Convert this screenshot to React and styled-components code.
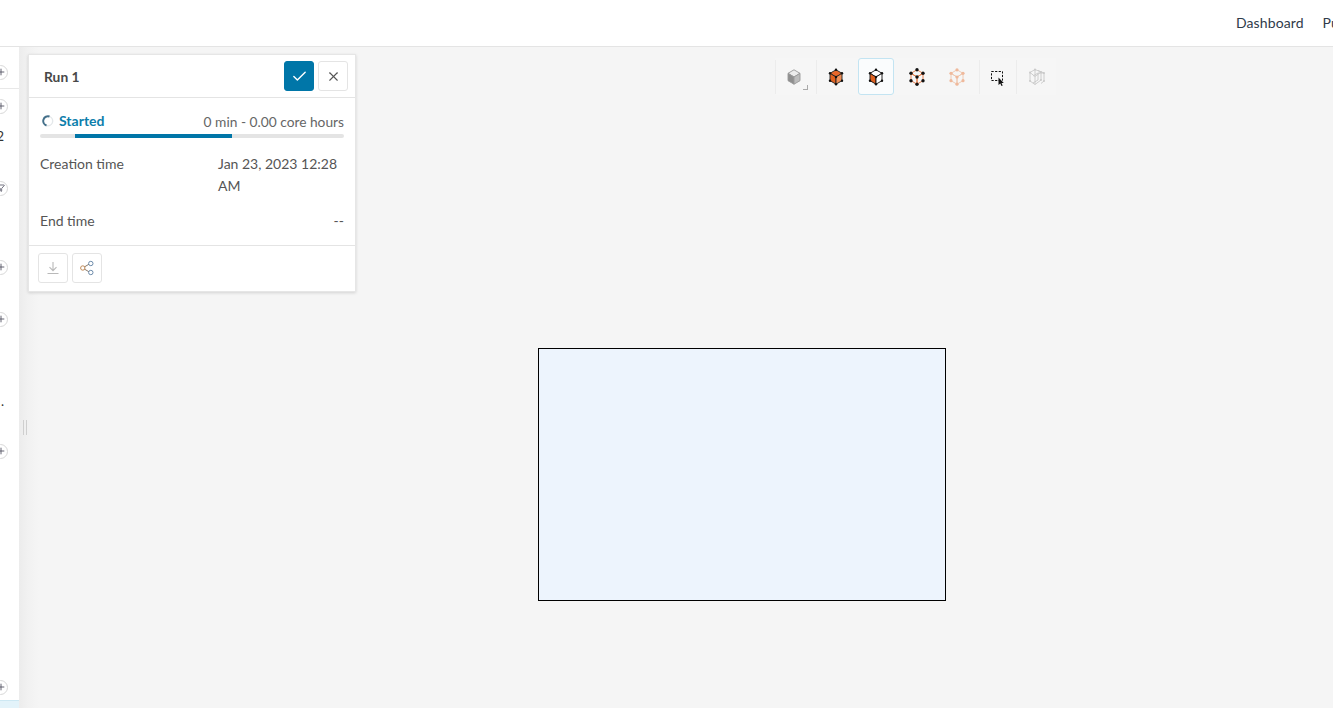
import React from "react";
import styled, { createGlobalStyle } from "styled-components";
import { Check, X, Plus, Filter } from "lucide-react";

const Global = createGlobalStyle`
  html, body { margin: 0; padding: 0; height: 100%; overflow: hidden; }
  body { font-family: Lato, "Liberation Sans", sans-serif; color: #444; background: #f5f5f5; }
  #root { height: 100%; }
`;

const Page = styled.div`display: flex; flex-direction: column; width: 1333px; height: 708px; overflow: hidden;`;
const Header = styled.header`flex: 0 0 47px; box-sizing: border-box; display: flex; align-items: center; justify-content: flex-end; background: #fff; border-bottom: 1px solid #e4e4e4;`;
const Nav = styled.nav`width: 97px; display: flex; gap: 19px; overflow: hidden; white-space: nowrap;`;
const NavLink = styled.a`font-size: 14px; line-height: 20px; letter-spacing: .1px; color: #2f3b4a; flex-shrink: 0;`;
const Body = styled.div`flex: 1; display: flex; min-height: 0;`;

const Sidebar = styled.aside`flex: 0 0 19px; background: #fff; display: flex; flex-direction: column; overflow: hidden; padding-top: 9px; box-sizing: border-box;`;
const SideRow = styled.div`
  flex: 0 0 ${p => p.$h || 26}px; margin-top: ${p => p.$mt || 0}px;
  display: flex; align-items: center; justify-content: flex-end; padding-right: ${p => p.$pr ?? 11}px;
  font-size: 13px; color: #333; white-space: nowrap;
  ${p => p.$line ? "border-bottom: 1px solid #e8e8e8;" : ""}
`;
const Circle = styled.span`flex-shrink: 0; width: 13px; height: 13px; border-radius: 50%; border: 1px solid #d8d8d8; background: #fff; display: flex; align-items: center; justify-content: center; color: #556;`;
const SideFoot = styled.div`flex: 1; background: #e3f3fa; border-top: 1px solid #cde8f3;`;

const Stage = styled.main`flex: 1; position: relative; display: flex; align-items: flex-start; background: linear-gradient(90deg, #ececec 0, #f1f1f1 8px, #f5f5f5 20px); padding: 7px 0 0 9px; box-sizing: border-box;`;
const Grip = styled.span`position: absolute; left: 4px; top: 373px; width: 1px; height: 15px; border-left: 1px solid #cfcfcf; border-right: 1px solid #cfcfcf; padding-right: 1px;`;

const Panel = styled.section`flex: 0 0 328px; box-sizing: border-box; background: #fff; border: 1px solid #e6e6e6; box-shadow: 0 1px 3px rgba(0,0,0,.14); height: 238px; display: flex; flex-direction: column;`;
const PanelHead = styled.div`flex: 0 0 42px; display: flex; align-items: center; gap: 4px; padding: 0 7px 0 15px; border-bottom: 1px solid #e4e4e4;`;
const Title = styled.h2`flex: 1; margin: 0 0 -1px; font-size: 13.8px; font-weight: 700; color: #484848;`;
const Btn = styled.button`
  width: 30px; height: 30px; padding: 0; display: flex; align-items: center; justify-content: center; border-radius: 3px; box-sizing: border-box;
  border: 1px solid ${p => p.$primary ? "#0076a8" : "#e4e4e4"};
  background: ${p => p.$primary ? "#0076a8" : "#fff"};
  color: ${p => p.$primary ? "#fff" : "#555"};
`;
const PanelBody = styled.div`flex: 1; padding: 14px 11px 0; display: flex; flex-direction: column;`;
const Status = styled.div`display: flex; align-items: center; justify-content: space-between; height: 18px; padding: 0 0 0 2px; font-size: 13.75px; color: #666;`;
const Started = styled.span`display: flex; align-items: center; gap: 5px; margin-bottom: 1px; color: #0d7eab; font-weight: 700; font-size: 14px;`;
const Track = styled.div`height: 4px; margin-top: 4px; background: #e4e4e4; border-radius: 2px; padding-left: 35px; display: flex;`;
const Fill = styled.div`width: 157px; background: #0076a8;`;
const InfoRow = styled.div`display: flex; font-size: 14px; line-height: 22px; color: #555; margin-top: ${p => p.$mt}px;`;
const Label = styled.span`flex: 0 0 178px;`;
const Value = styled.span`flex: 1; ${p => p.$right ? "text-align: right;" : ""}`;
const PanelFoot = styled.div`flex: 0 0 46px; box-sizing: border-box; border-top: 1px solid #e4e4e4; display: flex; gap: 4px; padding: 7px 9px;`;

const Toolbar = styled.div`margin: 4px 0 0 419px; display: flex; align-items: center; width: 281px; height: 37px; background: #f6f6f6;`;
const Tool = styled.div`
  flex: 0 0 ${p => p.$w}px; height: ${p => p.$active ? 37 : 34}px; box-sizing: border-box; display: flex; align-items: center; justify-content: center; position: relative;
  padding-right: ${p => p.$pr || 0}px;
  ${p => p.$sep ? "border-left: 1px solid #ececec;" : ""}
  ${p => p.$active ? "border: 1px solid #c3e4f2; border-radius: 3px; background: #fafcfd;" : ""}
`;
const Shape = styled.div`position: absolute; left: 519px; top: 301px; width: 408px; height: 253px; box-sizing: border-box; background: #edf4fd; border: 1px solid #000;`;
const Corner = styled.span`position: absolute; right: 8px; bottom: 4px; width: 4px; height: 4px; border-right: 1px solid #aaa; border-bottom: 1px solid #aaa;`;

const pts = { t: [10,2.8], tr: [16,6.3], br: [16,13.7], b: [10,17.2], bl: [4,13.7], tl: [4,6.3], c: [10,10] };
const P = (...k) => k.map(n => pts[n].join(",")).join(" ");
function Cube({ top="none", left="none", right="none", stroke="#000", dot, r=1.5, sw=.9 }) {
  return (
    <svg width="20" height="20" viewBox="0 0 20 20">
      <polygon points={P("t","tr","c","tl")} fill={top} stroke={stroke} strokeWidth={sw} strokeLinejoin="round" />
      <polygon points={P("tl","c","b","bl")} fill={left} stroke={stroke} strokeWidth={sw} strokeLinejoin="round" />
      <polygon points={P("tr","c","b","br")} fill={right} stroke={stroke} strokeWidth={sw} strokeLinejoin="round" />
      {dot && Object.keys(pts).map(k => <circle key={k} cx={pts[k][0]} cy={pts[k][1]} r={r} fill={dot} />)}
    </svg>
  );
}
const DownloadIcon = () => (
  <svg width="16" height="16" viewBox="0 0 16 16" fill="none" stroke="#b9b9b9" strokeWidth="1.1">
    <path d="M8 2v8.5M4.5 7.2 8 10.7l3.5-3.5M2.5 13.5h11" />
  </svg>
);
const ShareIcon = () => (
  <svg width="16" height="16" viewBox="0 0 16 16" fill="none" strokeWidth="1">
    <path d="M5.3 7 10 4.2M5.3 9 10 11.8" stroke="#8a7a6a" />
    <circle cx="3.8" cy="8" r="2.2" stroke="#c08a58" />
    <circle cx="11.8" cy="3.5" r="2.2" stroke="#6d8cab" />
    <circle cx="11.8" cy="12.5" r="2.2" stroke="#6d8cab" />
  </svg>
);
const WireGhost = () => (
  <svg width="20" height="20" viewBox="0 0 20 20" fill="none" stroke="#c8c8c8" strokeWidth=".9">
    <path d="M8 2.5 14 5v8l-6 4.5L3 14V5.5zM8 2.5v7M3 5.5 8 9.5 14 5M8 9.5v8" />
    <path d="M11 3.5 17 6v8l-3 2.5M6 9l5-3v7l-5 3M11 6l6 0" />
    {[[8,2.5],[14,5],[14,13],[3,14],[3,5.5],[17,6],[17,14]].map(([x,y]) => <circle key={x+"-"+y} cx={x} cy={y} r=".9" fill="#c8c8c8" stroke="none" />)}
  </svg>
);

export default function App() {
  const plus = <Circle><Plus size={10} strokeWidth={2.2} /></Circle>;
  return (
    <Page>
      <Global />
      <Header>
        <Nav><NavLink>Dashboard</NavLink><NavLink>Public Projects</NavLink></Nav>
      </Header>
      <Body>
        <Sidebar>
          <SideRow $h={32} $line>{plus}</SideRow>
          <SideRow $h={34}>{plus}</SideRow>
          <SideRow $pr={15}>2</SideRow>
          <SideRow $mt={26}><Circle><Filter size={8} strokeWidth={2.5} /></Circle></SideRow>
          <SideRow $mt={53}>{plus}</SideRow>
          <SideRow $mt={26}>{plus}</SideRow>
          <SideRow $mt={56} $pr={15}>.</SideRow>
          <SideRow $mt={24}>{plus}</SideRow>
          <SideRow $mt={210}>{plus}</SideRow>
          <SideFoot />
        </Sidebar>
        <Stage>
          <Grip />
          <Panel>
            <PanelHead>
              <Title>Run 1</Title>
              <Btn $primary><Check size={17} strokeWidth={2} /></Btn>
              <Btn><X size={15} strokeWidth={1.8} /></Btn>
            </PanelHead>
            <PanelBody>
              <Status>
                <Started>
                  <svg width="12" height="12" viewBox="0 0 12 12">
                    <circle cx="6" cy="6" r="4.7" fill="none" stroke="#e4e8ea" strokeWidth="1.4" />
                    <path d="M7.5 1.5A4.7 4.7 0 0 0 4.5 10.5" fill="none" stroke="#44708a" strokeWidth="2" />
                  </svg>
                  Started
                </Started>
                <span>0 min - 0.00 core hours</span>
              </Status>
              <Track><Fill /></Track>
              <InfoRow $mt={15}><Label>Creation time</Label><Value>Jan 23, 2023 12:28 AM</Value></InfoRow>
              <InfoRow $mt={13}><Label>End time</Label><Value $right>--</Value></InfoRow>
            </PanelBody>
            <PanelFoot>
              <Btn><DownloadIcon /></Btn>
              <Btn><ShareIcon /></Btn>
            </PanelFoot>
          </Panel>
          <Toolbar>
            <Tool $w={41} $sep $pr={4}>
              <Cube top="#ececec" left="#8f8f8f" right="#bcbcbc" stroke="#999" />
              <Corner />
            </Tool>
            <Tool $w={42} $sep $pr={3}><Cube top="#e8672a" left="#e0611f" right="#f08f58" stroke="#222" dot="#111" r={1.2} /></Tool>
            <Tool $w={36} $active><Cube top="#fff" left="#e0611f" right="#fff" stroke="#111" dot="#111" r={1.2} /></Tool>
            <Tool $w={45}><Cube stroke="#e8733a" dot="#111" r={1.7} /></Tool>
            <Tool $w={40} $pr={4}><Cube stroke="#eec6ae" dot="#efb99c" r={1.6} /></Tool>
            <Tool $w={37} $sep>
              <svg width="20" height="20" viewBox="0 0 20 20">
                <rect x="3.5" y="4.5" width="11" height="9" fill="none" stroke="#111" strokeWidth="1" strokeDasharray="2.2 1.4" />
                <path d="M10.5 10.5v7.5l1.8-1.6 1.2 2.6 1.2-.6-1.2-2.5h2.3z" fill="#111" />
              </svg>
            </Tool>
            <Tool $w={40} $sep><WireGhost /></Tool>
          </Toolbar>
          <Shape />
        </Stage>
      </Body>
    </Page>
  );
}
